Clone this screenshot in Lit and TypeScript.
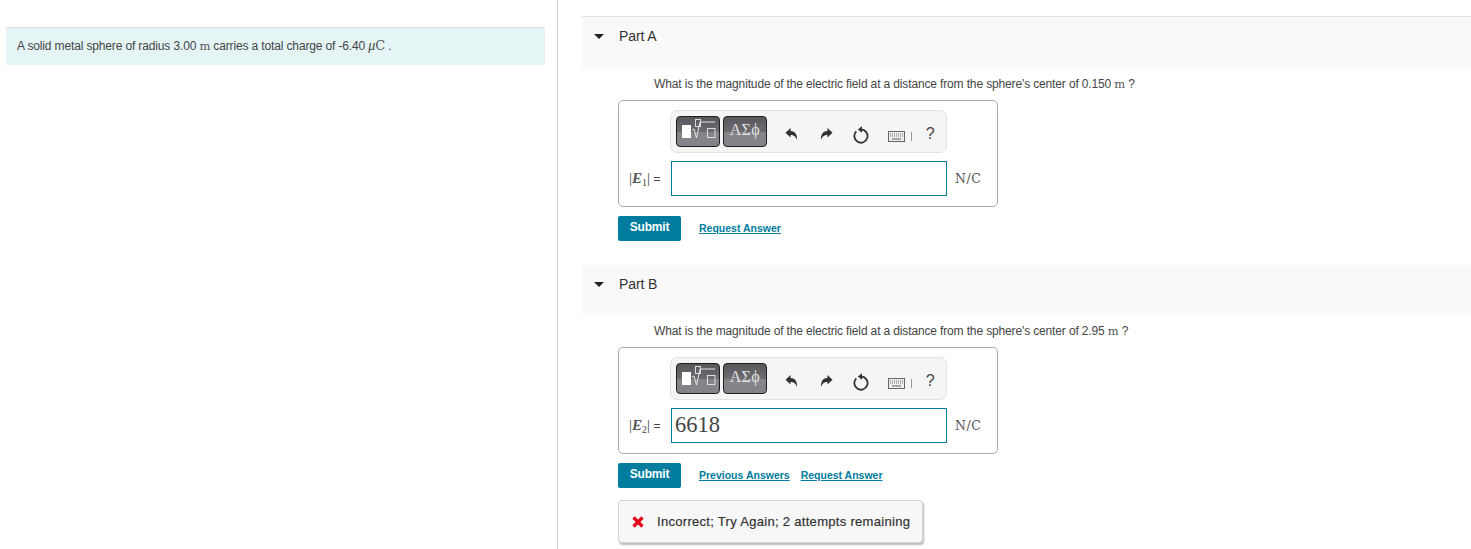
import { LitElement, css, html } from "lit";
import { customElement, property } from "lit/decorators.js";

@customElement("math-toolbar")
export class MathToolbar extends LitElement {
  static styles = css`
    :host {
      display: flex;
      width: 277px;
      height: 43px;
      margin-left: 51px;
      box-sizing: border-box;
      background: #f5f5f5;
      border: 1px solid #e2e2e2;
      border-radius: 7px;
      align-items: flex-start;
      padding: 5px 0 0 5px;
    }
    .tpl {
      width: 44px;
      height: 31px;
      box-sizing: border-box;
      border: 1px solid #1f1f1f;
      border-radius: 4px;
      background: linear-gradient(#58585c 0%, #6c6c70 50%, #85858b 54%, #828288 100%);
      margin-right: 3px;
      color: #fff;
      display: block;
      padding: 0;
    }
    .tpl svg {
      display: block;
    }
    .greek {
      font: 16px "Liberation Serif", serif;
      color: #e0e0e0;
      text-align: center;
      line-height: 26px;
      letter-spacing: 0.3px;
    }
    .ico {
      position: absolute;
      top: 11px;
    }
    .icons {
      position: relative;
      width: 178px;
      height: 36px;
    }
    .sep {
      position: absolute;
      left: 141px;
      top: 16px;
      width: 1px;
      height: 9px;
      background: #9a9a9a;
    }
    .help {
      position: absolute;
      left: 156px;
      top: 9px;
      font: 16px "Liberation Sans", sans-serif;
      color: #444;
    }
  `;

  render() {
    return html`
      <div class="tpl">
        <svg width="42" height="29" viewBox="0 0 42 29">
          <rect x="5" y="8" width="9" height="13" fill="#fff" />
          <rect x="18.5" y="2.5" width="5" height="7" fill="none" stroke="#ddd" stroke-width="1" />
          <path d="M15 13 l2 -1 l2.5 9 l3.5 -16 h15" fill="none" stroke="#e4e4e4" stroke-width="1" />
          <rect x="30.5" y="11.5" width="7.5" height="9" fill="none" stroke="#ddd" stroke-width="1" />
        </svg>
      </div>
      <div class="tpl greek">ΑΣϕ</div>
      <div class="icons">
        <svg class="ico" style="left:15px" width="13" height="15" viewBox="0 0 14 15">
          <path d="M0.5 5.5 L6 0.5 V3.6 C10.5 3.8 13.2 6.5 13 13.5 C11.5 9.6 9.8 8 6 8 V10.8 Z" fill="#333" />
        </svg>
        <svg class="ico" style="left:50px" width="13" height="15" viewBox="0 0 14 15">
          <path d="M13.5 5.5 L8 0.5 V3.6 C3.5 3.8 0.8 6.5 1 13.5 C2.5 9.6 4.2 8 8 8 V10.8 Z" fill="#333" />
        </svg>
        <svg class="ico" style="left:83px;top:10px" width="16" height="18" viewBox="0 0 16 18">
          <path d="M8 3.5 A6.6 6.6 0 1 1 3.3 5.4" fill="none" stroke="#333" stroke-width="1.8" />
          <path d="M9 0.3 V6.7 L4.8 3.5 Z" fill="#333" />
        </svg>
        <svg class="ico" style="left:118px;top:15px" width="17" height="11" viewBox="0 0 17 11">
          <rect x="0.5" y="0.5" width="16" height="10" fill="#eee" stroke="#666" />
          <path d="M2 3 h13 M2 5 h13" stroke="#777" stroke-width="1" stroke-dasharray="1 1" />
          <path d="M4 8 h9" stroke="#888" stroke-width="1.4" />
        </svg>
        <span class="sep"></span>
        <span class="help">?</span>
      </div>
    `;
  }
}

@customElement("quiz-part")
export class QuizPart extends LitElement {
  static styles = css`
    :host {
      display: block;
      font-family: "Liberation Sans", Arial, sans-serif;
      color: #444;
    }
    .header {
      height: 50px;
      box-sizing: border-box;
      background: #f9f9f9;
      display: flex;
      align-items: flex-start;
      padding: 11px 0 0 12px;
      font-size: 14px;
      line-height: 16px;
      color: #333;
      letter-spacing: -0.1px;
    }
    .header.first {
      height: 52px;
      border-top: 1px solid #dfe3e6;
    }
    .caret {
      width: 0;
      height: 0;
      border-left: 5px solid transparent;
      border-right: 5px solid transparent;
      border-top: 5px solid #222;
      margin: 6px 15px 0 0;
    }
    .question {
      margin: 8px 0 0 72px;
      font-size: 12px;
      line-height: 16px;
      height: 16px;
      color: #444;
      letter-spacing: -0.14px;
    }
    .m {
      font-family: "DejaVu Serif", serif;
      font-size: 11.5px;
      color: #555;
    }
    .box {
      margin: 8px 0 0 36px;
      width: 380px;
      height: 107px;
      box-sizing: border-box;
      border: 1px solid #aaa;
      border-radius: 5px;
      padding-top: 9px;
    }
    .row {
      display: flex;
      align-items: center;
      margin-top: 8px;
      height: 35px;
    }
    .label {
      width: 52px;
      box-sizing: border-box;
      padding-left: 10px;
      font-size: 12px;
      white-space: nowrap;
    }
    .label .bar,
    .label i,
    .label sub {
      font-family: "Liberation Serif", serif;
    }
    .label .bar {
      font-size: 15px;
    }
    .label i {
      font-size: 15px;
      font-weight: bold;
      color: #555;
    }
    .label sub {
      font-size: 10px;
      line-height: 0;
      font-style: normal;
    }
    .field {
      width: 276px;
      height: 35px;
      box-sizing: border-box;
      border: 1px solid #007c9e;
      background: #fff;
      font: 22.5px/31px "Liberation Serif", serif;
      color: #444;
      padding-left: 3px;
    }
    .unit {
      font: 12.5px "DejaVu Serif", serif;
      margin-left: 8px;
      letter-spacing: 0.6px;
      color: #555;
    }
    .actions {
      display: flex;
      align-items: center;
      margin: 9px 0 0 36px;
      height: 25px;
    }
    .submit {
      width: 63px;
      height: 25px;
      background: #007c9e;
      color: #fff;
      border-radius: 2px;
      font-size: 12px;
      font-weight: bold;
      line-height: 23px;
      text-align: center;
      margin-right: 18px;
      letter-spacing: -0.2px;
    }
    a {
      color: #007c9e;
      font-size: 10.5px;
      font-weight: bold;
      text-decoration: underline;
      margin: 0 11px 2px 0;
      cursor: pointer;
    }
  `;

  @property() part = "";
  @property() distance = "";
  @property() index = "1";
  @property() value = "";
  @property({ type: Boolean }) first = false;
  @property({ type: Boolean }) previous = false;

  render() {
    return html`
      <div class="header ${this.first ? "first" : ""}">
        <span class="caret"></span>Part ${this.part}
      </div>
      <div class="question">
        What is the magnitude of the electric field at a distance from the sphere's center of
        ${this.distance} <span class="m">m</span> ?
      </div>
      <div class="box">
        <math-toolbar></math-toolbar>
        <div class="row">
          <div class="label"><span class="bar">|</span><i>E</i><sub>${this.index}</sub><span class="bar">|</span> =</div>
          <div class="field">${this.value}</div>
          <div class="unit">N/C</div>
        </div>
      </div>
      <div class="actions">
        <div class="submit">Submit</div>
        ${this.previous ? html`<a>Previous Answers</a>` : ""}
        <a>Request Answer</a>
      </div>
    `;
  }
}

@customElement("app-root")
export class AppRoot extends LitElement {
  static styles = css`
    :host {
      display: flex;
      width: 1471px;
      height: 549px;
      overflow: hidden;
      background: #fff;
      font-family: "Liberation Sans", Arial, sans-serif;
    }
    .left {
      width: 558px;
      height: 549px;
      box-sizing: border-box;
      border-right: 1px solid #c8ced3;
      padding: 27px 0 0 6px;
    }
    .intro {
      width: 539px;
      height: 38px;
      box-sizing: border-box;
      background: #e5f5f6;
      border-top: 1px solid #dde3e5;
      padding-left: 11px;
      font-size: 12px;
      line-height: 36px;
      color: #444;
      letter-spacing: -0.14px;
    }
    .m {
      font-family: "DejaVu Serif", serif;
      font-size: 11.5px;
      color: #555;
    }
    .mu {
      font-family: "Liberation Serif", serif;
      font-size: 14px;
      font-style: italic;
    }
    .c {
      font-size: 13px;
    }
    .right {
      width: 889px;
      margin-left: 24px;
      padding-top: 16px;
    }
    .gap {
      height: 24px;
    }
    .feedback {
      margin: 12px 0 0 36px;
      width: 305px;
      height: 43px;
      box-sizing: border-box;
      background: #f7f7f7;
      border: 1px solid #d4d4d4;
      border-radius: 4px;
      box-shadow: 1px 2px 2px #bbb;
      display: flex;
      align-items: center;
      padding-left: 13px;
      font-size: 13px;
      letter-spacing: 0.3px;
      color: #333;
      -webkit-text-stroke: 0.2px #333;
    }
    .feedback svg {
      margin-right: 13px;
    }
  `;

  render() {
    return html`
      <div class="left">
        <div class="intro">
          A solid metal sphere of radius 3.00 <span class="m">m</span> carries a total charge of
          -6.40 <span class="mu">μ</span><span class="m c">C</span> .
        </div>
      </div>
      <div class="right">
        <quiz-part first part="A" distance="0.150" index="1"></quiz-part>
        <div class="gap"></div>
        <quiz-part part="B" distance="2.95" index="2" value="6618" previous></quiz-part>
        <div class="feedback">
          <svg width="12" height="12" viewBox="0 0 12 12">
            <path d="M1.5 1.5 L10.5 10.5 M10.5 1.5 L1.5 10.5" stroke="#e2001a" stroke-width="3.2" />
          </svg>
          Incorrect; Try Again; 2 attempts remaining
        </div>
      </div>
    `;
  }
}
